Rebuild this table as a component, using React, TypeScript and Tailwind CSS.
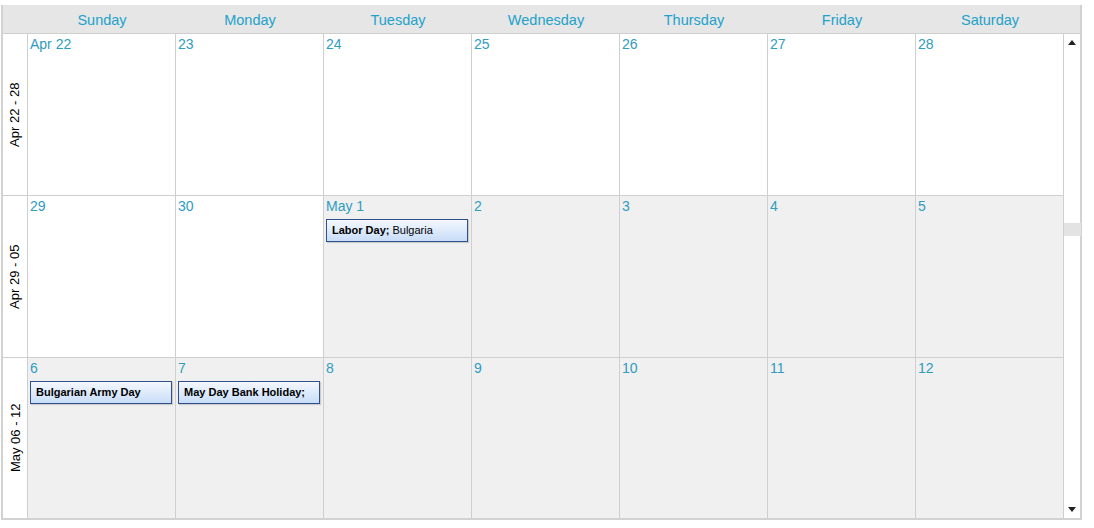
type Cell = { label: string; current: boolean; appt?: { bold: string; rest?: string } }

const days = ['Sunday', 'Monday', 'Tuesday', 'Wednesday', 'Thursday', 'Friday', 'Saturday']

const weeks: { label: string; cells: Cell[] }[] = [
  {
    label: 'Apr 22 - 28',
    cells: ['Apr 22', '23', '24', '25', '26', '27', '28'].map((label) => ({ label, current: false })),
  },
  {
    label: 'Apr 29 - 05',
    cells: [
      { label: '29', current: false },
      { label: '30', current: false },
      { label: 'May 1', current: true, appt: { bold: 'Labor Day;', rest: 'Bulgaria' } },
      { label: '2', current: true },
      { label: '3', current: true },
      { label: '4', current: true },
      { label: '5', current: true },
    ],
  },
  {
    label: 'May 06 - 12',
    cells: [
      { label: '6', current: true, appt: { bold: 'Bulgarian Army Day' } },
      { label: '7', current: true, appt: { bold: 'May Day Bank Holiday;' } },
      { label: '8', current: true },
      { label: '9', current: true },
      { label: '10', current: true },
      { label: '11', current: true },
      { label: '12', current: true },
    ],
  },
]

function Appointment({ bold, rest }: { bold: string; rest?: string }) {
  return (
    <div className="mt-[5px] mr-[3px] ml-[2px] flex h-[23px] items-center gap-[3px] overflow-hidden whitespace-nowrap border border-[#2f4f8d] bg-gradient-to-b from-[#f4f8ff] to-[#c8ddf8] pl-[5px] text-[11px] text-black shadow-[1px_1px_1px_rgba(0,0,0,0.15)]">
      <span className="font-bold">{bold}</span>
      {rest && <span>{rest}</span>}
    </div>
  )
}

export default function App() {
  return (
    <div className="min-h-screen bg-white pt-[5px] pl-[1px] font-['Liberation_Sans',Arial,sans-serif]">
      <div className="w-[1081px] border-x-2 border-b-2 border-[#d2d2d2]">
        <div className="flex h-[29px] border-b border-[#cfcfcf] bg-[#e6e6e6]">
          <div className="w-[25px]" />
          {days.map((d) => (
            <div key={d} className="flex w-[148px] items-center justify-center pt-[3px] text-[14.5px] text-[#21a2cb]">
              {d}
            </div>
          ))}
        </div>
        <div className="flex">
          <div className="flex flex-col">
            {weeks.map((w, i) => (
              <div key={w.label} className={`flex ${i < 2 ? 'h-[162px] border-b' : 'h-[160px]'} border-[#cfcfcf]`}>
                <div className="flex w-[25px] items-center justify-center border-r border-[#cfcfcf]">
                  <span className="-rotate-90 whitespace-nowrap text-[13px] text-black">{w.label}</span>
                </div>
                {w.cells.map((c) => (
                  <div
                    key={c.label}
                    className={`w-[148px] border-r border-[#cfcfcf] ${c.current ? 'bg-[#f0f0f0]' : 'bg-white'}`}
                  >
                    <div className="pl-[2px] pt-[2px] text-[14px] leading-[16px] text-[#2f9cc0]">{c.label}</div>
                    {c.appt && <Appointment bold={c.appt.bold} rest={c.appt.rest} />}
                  </div>
                ))}
              </div>
            ))}
          </div>
          <div className="relative flex w-[17px] flex-col items-center justify-between bg-white py-[6px]">
            <svg width="8" height="5" viewBox="0 0 8 5">
              <path d="M0 5 L4 0 L8 5 Z" fill="#222" />
            </svg>
            <div className="absolute top-[189px] left-0 h-[13px] w-[17px] bg-[#e3e3e3]" />
            <svg width="8" height="5" viewBox="0 0 8 5">
              <path d="M0 0 L4 5 L8 0 Z" fill="#222" />
            </svg>
          </div>
        </div>
      </div>
    </div>
  )
}
